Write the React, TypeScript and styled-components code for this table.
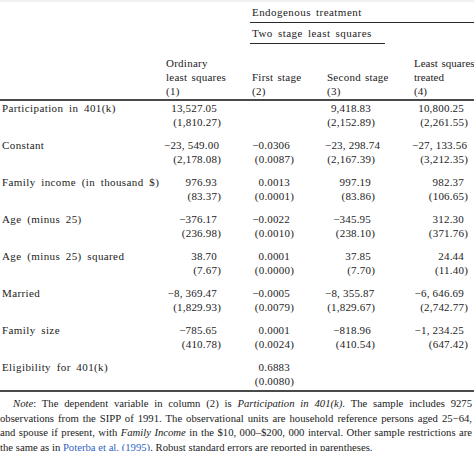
import React from "react"
import styled, { createGlobalStyle } from "styled-components"

const GlobalStyle = createGlobalStyle`
  html, body {
    margin: 0;
    padding: 0;
    background: #ffffff;
  }
  body {
    font-family: "Liberation Serif", "Times New Roman", serif;
    font-size: 11px;
    color: #1c1c1c;
  }
`

const Page = styled.div`
  width: 474px;
  height: 451px;
  overflow: hidden;
  border-top: 2px solid #f1f1f1;
  box-sizing: border-box;
`

const Table = styled.div`
  display: grid;
  grid-template-columns: 164px 86px 75px 87px 70px;
  width: 482px;
  line-height: 14px;
`

const Blank = styled.div<{ $span: string }>`
  grid-column: ${(p) => p.$span};
`

const GroupHead = styled.div<{ $span: string; $cut?: number }>`
  grid-column: ${(p) => p.$span};
  padding: 3px 0 3px 2px;
  margin-right: ${(p) => p.$cut ?? 0}px;
  border-bottom: 1px solid #2a2a2a;
  letter-spacing: 0.45px;
  word-spacing: 2px;
  white-space: nowrap;
`

const ColHead = styled.div<{ $tight?: boolean }>`
  display: flex;
  flex-direction: column;
  justify-content: flex-end;
  padding: 12px 0 1px 2px;
  border-bottom: 2px solid #4a4a4a;
  letter-spacing: ${(p) => (p.$tight ? 0 : 0.25)}px;
  word-spacing: 1px;
  white-space: nowrap;
`

const Label = styled.div<{ $last?: boolean }>`
  padding: 0 0 ${(p) => (p.$last ? 2 : 9)}px 2px;
  white-space: nowrap;
  letter-spacing: 0.4px;
  word-spacing: 2.5px;
`

const Cell = styled.div<{ $pr: number; $last?: boolean }>`
  text-align: right;
  padding: 0 ${(p) => p.$pr}px ${(p) => (p.$last ? 2 : 9)}px 0;
  white-space: nowrap;
  letter-spacing: 0.2px;
`

const Est = styled.span`
  display: block;
  padding-right: 4px;
`

const SE = styled.span`
  display: block;
`

const Rule = styled.div`
  grid-column: 1 / -1;
  border-top: 2px solid #4a4a4a;
`

const Note = styled.div`
  width: 472px;
  padding-top: 4px;
  line-height: 14.5px;
  font-size: 10.7px;
`

const NoteLine = styled.div<{ $indent?: boolean; $last?: boolean }>`
  white-space: nowrap;
  text-align: justify;
  text-align-last: ${(p) => (p.$last ? "left" : "justify")};
  text-indent: ${(p) => (p.$indent ? 13 : 0)}px;
`

const Link = styled.span`
  color: #2f63c4;
`

type Row = {
  label: string
  vals: ([string, string] | null)[]
}

const rows: Row[] = [
  {
    label: "Participation in 401(k)",
    vals: [["13,527.05", "(1,810.27)"], null, ["9,418.83", "(2,152.89)"], ["10,800.25", "(2,261.55)"]],
  },
  {
    label: "Constant",
    vals: [
      ["−23, 549.00", "(2,178.08)"],
      ["−0.0306", "(0.0087)"],
      ["−23, 298.74", "(2,167.39)"],
      ["−27, 133.56", "(3,212.35)"],
    ],
  },
  {
    label: "Family income (in thousand $)",
    vals: [["976.93", "(83.37)"], ["0.0013", "(0.0001)"], ["997.19", "(83.86)"], ["982.37", "(106.65)"]],
  },
  {
    label: "Age (minus 25)",
    vals: [["−376.17", "(236.98)"], ["−0.0022", "(0.0010)"], ["−345.95", "(238.10)"], ["312.30", "(371.76)"]],
  },
  {
    label: "Age (minus 25) squared",
    vals: [["38.70", "(7.67)"], ["0.0001", "(0.0000)"], ["37.85", "(7.70)"], ["24.44", "(11.40)"]],
  },
  {
    label: "Married",
    vals: [
      ["−8, 369.47", "(1,829.93)"],
      ["−0.0005", "(0.0079)"],
      ["−8, 355.87", "(1,829.67)"],
      ["−6, 646.69", "(2,742.77)"],
    ],
  },
  {
    label: "Family size",
    vals: [
      ["−785.65", "(410.78)"],
      ["0.0001", "(0.0024)"],
      ["−818.96", "(410.54)"],
      ["−1, 234.25", "(647.42)"],
    ],
  },
  {
    label: "Eligibility for 401(k)",
    vals: [null, ["0.6883", "(0.0080)"], null, null],
  },
]

const pads = [29, 31, 37, 14]

const App: React.FC = () => {
  return (
    <>
      <GlobalStyle />
      <Page>
        <Table>
          <Blank $span="1 / 3" />
          <GroupHead $span="3 / 6">Endogenous treatment</GroupHead>
          <Blank $span="1 / 3" />
          <GroupHead $span="3 / 5" $cut={27}>
            Two stage least squares
          </GroupHead>
          <Blank $span="5 / 6" />

          <ColHead />
          <ColHead>
            <span>Ordinary</span>
            <span>least squares</span>
            <span>(1)</span>
          </ColHead>
          <ColHead>
            <span>First stage</span>
            <span>(2)</span>
          </ColHead>
          <ColHead>
            <span>Second stage</span>
            <span>(3)</span>
          </ColHead>
          <ColHead $tight>
            <span>Least squares</span>
            <span>treated</span>
            <span>(4)</span>
          </ColHead>

          {rows.map((r, i) => {
            const last = i === rows.length - 1
            return (
              <React.Fragment key={r.label}>
                <Label $last={last}>{r.label}</Label>
                {r.vals.map((v, j) => (
                  <Cell key={j} $pr={pads[j]} $last={last}>
                    {v && (
                      <>
                        <Est>{v[0]}</Est>
                        <SE>{v[1]}</SE>
                      </>
                    )}
                  </Cell>
                ))}
              </React.Fragment>
            )
          })}
          <Rule />
        </Table>

        <Note>
          <NoteLine $indent>
            <i>Note</i>: The dependent variable in column (2) is <i>Participation in 401(k)</i>. The sample includes 9275
          </NoteLine>
          <NoteLine>
            observations from the SIPP of 1991. The observational units are household reference persons aged 25−64,
          </NoteLine>
          <NoteLine>
            and spouse if present, with <i>Family Income</i> in the $10, 000–$200, 000 interval. Other sample restrictions are
          </NoteLine>
          <NoteLine $last>
            the same as in <Link>Poterba et al. (1995)</Link>. Robust standard errors are reported in parentheses.
          </NoteLine>
        </Note>
      </Page>
    </>
  )
}

export default App
